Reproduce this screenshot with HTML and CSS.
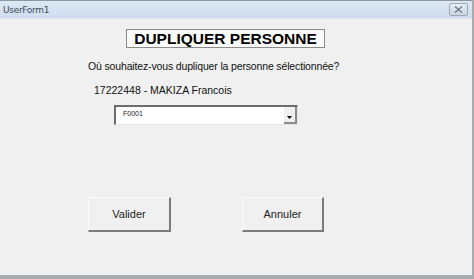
FILE: index.html
```html
<!DOCTYPE html>
<html>
	<head>
		<title>UserForm1</title>
		<link rel="stylesheet" href="styles.css">
	</head>
	<body>
		<div class="window">
			<!--Title bar-->
			<div class="titlebar">
				<span class="caption">UserForm1</span>
				<span class="close">
					<svg width="9" height="7" viewBox="0 0 9 7"><path d="M1 0.5 L8 6.5 M8 0.5 L1 6.5" stroke="#6a7480" stroke-width="1.3" fill="none"/></svg>
				</span>
			</div>
			<!--Form body-->
			<div class="form">
				<div class="heading">DUPLIQUER PERSONNE</div>
				<p class="question">Où souhaitez-vous dupliquer la personne sélectionnée?</p>
				<p class="person">17222448 - MAKIZA Francois</p>
				<div class="combo">
					<span class="combo-text">F0001</span>
					<span class="combo-btn">
						<svg width="5" height="3" viewBox="0 0 5 3"><path d="M0 0 L5 0 L2.5 3 Z" fill="#000"/></svg>
					</span>
				</div>
				<div class="buttons">
					<button class="btn">Valider</button>
					<button class="btn">Annuler</button>
				</div>
			</div>
		</div>
	</body>
</html>
```
FILE: styles.css
```css
body {
	margin: 0;
	background: #a9abae;
}

.window {
	width: 472px;
	height: 275px;
	box-sizing: border-box;
	background: #f0f0f0;
	border-top: 1px solid #8f959c;
	display: flex;
	flex-direction: column;
	font-family: "Liberation Sans", Arial, sans-serif;
}

.titlebar {
	height: 17px;
	display: flex;
	align-items: center;
	justify-content: space-between;
	padding: 0 4px 0 3px;
	background: linear-gradient(#dce7f4, #cfdded);
	border-bottom: 1px solid #e3e9f0;
}

.caption {
	font-family: "DejaVu Sans", sans-serif;
	font-size: 9px;
	color: #3c4a5a;
	letter-spacing: -0.3px;
}

.close {
	width: 17px;
	height: 11px;
	display: flex;
	align-items: center;
	justify-content: center;
	border: 1px solid #9aa6b4;
	border-radius: 2px;
	background: linear-gradient(#e6edf5, #c9d4e1);
}

.form {
	flex: 1;
	display: flex;
	flex-direction: column;
	align-items: flex-start;
}

.heading {
	margin: 10px 0 0 126px;
	width: 199px;
	height: 19px;
	box-sizing: border-box;
	border: 1px solid #8a8a8a;
	background: #fafafa;
	font-weight: bold;
	font-size: 15.5px;
	line-height: 17px;
	text-align: center;
	color: #000;
}

.question {
	margin: 12px 0 0 88px;
	font-size: 10.5px;
	letter-spacing: -0.15px;
	color: #111;
}

.person {
	margin: 12px 0 0 94px;
	font-size: 10.5px;
	color: #111;
}

.combo {
	margin: 9px 0 0 114px;
	width: 184px;
	height: 20px;
	box-sizing: border-box;
	background: #fff;
	border-top: 2px solid #6d6d6d;
	border-left: 2px solid #6d6d6d;
	border-right: 1px solid #e4e4e4;
	border-bottom: 1px solid #e4e4e4;
	display: flex;
	justify-content: space-between;
}

.combo-text {
	font-size: 7px;
	color: #222;
	padding: 3px 0 0 7px;
}

.combo-btn {
	width: 11px;
	display: flex;
	align-items: center;
	justify-content: center;
	padding-top: 5px;
	border-right: 2px solid #8c8c8c;
	border-bottom: 2px solid #8c8c8c;
	background: #f0f0f0;
}

.buttons {
	margin: 72px 0 0 88px;
	display: flex;
	gap: 71px;
}

.btn {
	width: 83px;
	height: 35px;
	box-sizing: border-box;
	background: #f0f0f0;
	border-top: 1px solid #fcfcfc;
	border-left: 1px solid #fcfcfc;
	border-right: 2px solid #7c7c7c;
	border-bottom: 2px solid #7c7c7c;
	font-family: "Liberation Sans", Arial, sans-serif;
	font-size: 11px;
	color: #222;
	padding: 0;
}

.btn + .btn {
	width: 82px;
}
```
